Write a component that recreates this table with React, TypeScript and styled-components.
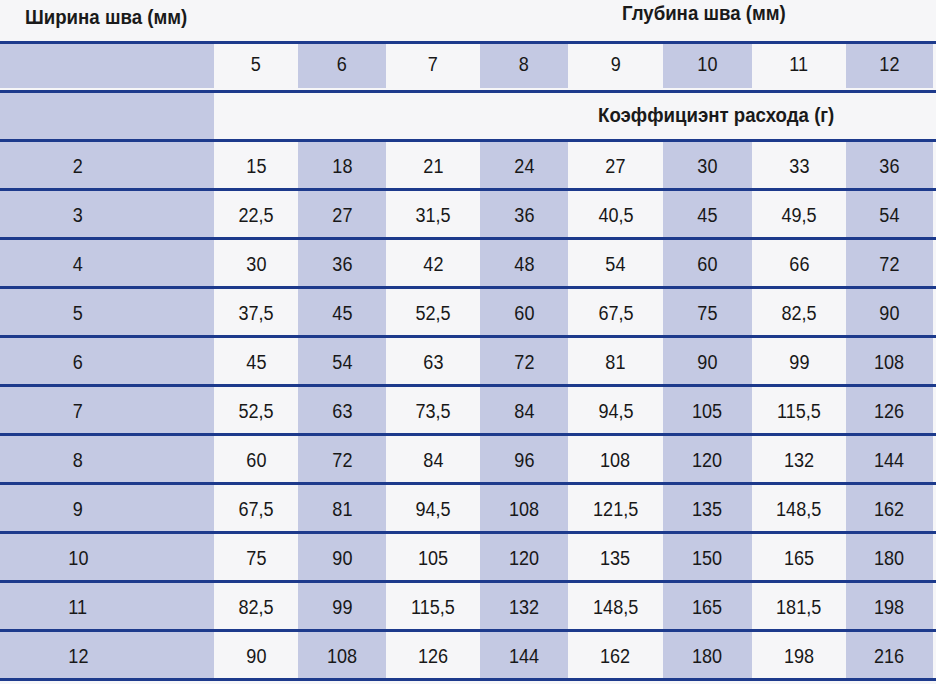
import React from "react";
import styled, { createGlobalStyle } from "styled-components";

const GlobalStyle = createGlobalStyle`
  html, body { margin: 0; padding: 0; background: #f6f6f8; }
  * { box-sizing: border-box; }
`;

const BLUE = "#c4c9e3";
const WHITE = "#f6f6f8";
const LINE = "#1d3a8c";
const COLS = "214px 84px 88px 94px 88px 95px 89px 94px 87px 1fr";

const Page = styled.div`
  width: 936px;
  height: 684px;
  overflow: hidden;
  background: ${WHITE};
  font-family: "Liberation Sans", Arial, sans-serif;
  color: #181818;
`;

const TitleBar = styled.div`
  display: grid;
  grid-template-columns: 622px 1fr;
  height: 41px;
`;

const Title = styled.div<{ $top: number; $left?: number }>`
  padding-top: ${(p) => p.$top}px;
  padding-left: ${(p) => p.$left ?? 0}px;
  white-space: nowrap;
`;

const Heading = styled.span`
  display: inline-block;
  font-size: 20.5px;
  font-weight: 700;
  color: #1a1a1a;
  transform: scaleX(0.91);
  transform-origin: left center;
`;

const Table = styled.div`
  border-top: 3px solid ${LINE};
`;

const Row = styled.div`
  display: grid;
  grid-template-columns: ${COLS};
  height: 49px;
  border-bottom: 3px solid ${LINE};
`;

const Cell = styled.div<{ $blue: boolean; $head?: boolean }>`
  display: flex;
  align-items: center;
  justify-content: center;
  background: ${(p) => (p.$blue ? BLUE : WHITE)};
  padding-top: ${(p) => (p.$head ? 0 : 2)}px;
  padding-bottom: ${(p) => (p.$head ? 4 : 0)}px;
  border-bottom: ${(p) => (p.$head ? `2px solid ${WHITE}` : "none")};
`;

const LabelCell = styled(Cell)`
  padding-right: 58px;
`;

const Num = styled.span`
  display: inline-block;
  font-size: 20.5px;
  transform: scaleX(0.88);
`;

const Span = styled.div`
  grid-column: 2 / -1;
  display: flex;
  align-items: center;
  padding-left: 384px;
  padding-bottom: 2px;
  background: ${WHITE};
  white-space: nowrap;
`;

const depths = [5, 6, 7, 8, 9, 10, 11, 12];
const widths = [2, 3, 4, 5, 6, 7, 8, 9, 10, 11, 12];

const fmt = (n: number) => String(n).replace(".", ",");

export default function App() {
  return (
    <Page>
      <GlobalStyle />
      <TitleBar>
        <Title $top={5} $left={25}>
          <Heading>Ширина шва (мм)</Heading>
        </Title>
        <Title $top={1}>
          <Heading>Глубина шва (мм)</Heading>
        </Title>
      </TitleBar>
      <Table>
        <Row>
          <LabelCell $blue $head />
          {depths.map((d, i) => (
            <Cell key={d} $blue={i % 2 === 1} $head>
              <Num>{d}</Num>
            </Cell>
          ))}
          <Cell $blue={false} $head />
        </Row>
        <Row>
          <LabelCell $blue />
          <Span>
            <Heading>Коэффициэнт расхода (г)</Heading>
          </Span>
        </Row>
        {widths.map((w) => (
          <Row key={w}>
            <LabelCell $blue>
              <Num>{w}</Num>
            </LabelCell>
            {depths.map((d, i) => (
              <Cell key={d} $blue={i % 2 === 1}>
                <Num>{fmt(w * d * 1.5)}</Num>
              </Cell>
            ))}
            <Cell $blue={false} />
          </Row>
        ))}
      </Table>
    </Page>
  );
}
